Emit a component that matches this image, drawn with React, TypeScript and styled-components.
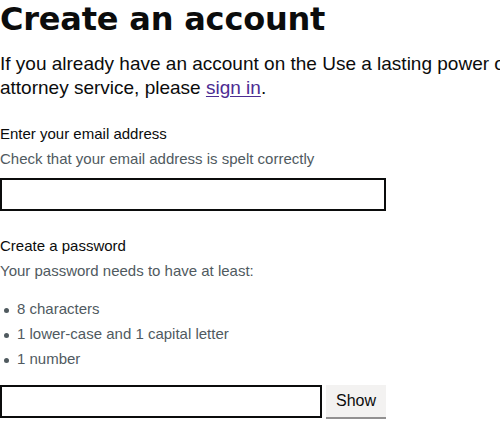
import React from 'react';
import styled, { createGlobalStyle } from 'styled-components';

const GlobalStyle = createGlobalStyle`
    html, body {
        margin: 0;
        padding: 0;
        background: #ffffff;
        overflow: hidden;
    }
    body {
        font-family: "Liberation Sans", Arial, sans-serif;
        color: #0b0c0c;
    }
`;

const Page = styled.main`
    width: 520px;
    padding: 0;
`;

const Heading = styled.h1`
    margin: 0 0 14px;
    font-family: "DejaVu Sans", "Liberation Sans", sans-serif;
    font-size: 32px;
    line-height: 38px;
    font-weight: 700;
    letter-spacing: -0.2px;
`;

const Lead = styled.p`
    margin: 0 0 24px;
    font-size: 19px;
    line-height: 24px;
    a {
        color: #4c2c92;
        text-decoration: underline;
        text-underline-offset: 2px;
    }
`;

const FormGroup = styled.div`
    margin-bottom: 25px;
`;

const Label = styled.label`
    display: block;
    margin-bottom: 5px;
    font-size: 15px;
    line-height: 20px;
`;

const Hint = styled.div<{ $gap: number }>`
    margin-bottom: ${(p) => p.$gap}px;
    font-size: 15px;
    line-height: 20px;
    color: #505a5f;
`;

const Rules = styled.ul`
    margin: 0 0 16px;
    padding: 0;
    list-style: none;
    color: #505a5f;
    li {
        display: flex;
        align-items: center;
        margin-bottom: 5px;
        font-size: 15px;
        line-height: 20px;
    }
    li::before {
        content: '';
        width: 5px;
        height: 5px;
        border-radius: 50%;
        background: #505a5f;
        margin: 2px 8px 0 4px;
    }
`;

const Input = styled.input<{ $width: number }>`
    box-sizing: border-box;
    display: block;
    width: ${(p) => p.$width}px;
    height: 33px;
    margin: 0;
    padding: 4px 6px;
    border: 2px solid #0b0c0c;
    border-radius: 0;
    font-family: inherit;
    font-size: 16px;
    background: #ffffff;
`;

const PasswordRow = styled.div`
    display: flex;
    align-items: flex-start;
    gap: 4px;
`;

const ShowButton = styled.button`
    box-sizing: border-box;
    width: 60px;
    height: 32px;
    margin: 0;
    padding: 0;
    border: 0;
    border-radius: 0;
    background: #f3f2f1;
    box-shadow: 0 2px 0 #929191;
    font-family: inherit;
    font-size: 16px;
    color: #0b0c0c;
`;

const App = () => {
    return (
        <Page>
            <GlobalStyle />
            <Heading>Create an account</Heading>
            <Lead>
                If you already have an account on the Use a lasting power of attorney service,
                please <a href="#">sign in</a>.
            </Lead>
            <FormGroup>
                <Label htmlFor="email">Enter your email address</Label>
                <Hint $gap={9}>Check that your email address is spelt correctly</Hint>
                <Input id="email" type="email" $width={386} />
            </FormGroup>
            <FormGroup>
                <Label htmlFor="password">Create a password</Label>
                <Hint $gap={18}>Your password needs to have at least:</Hint>
                <Rules>
                    <li>8 characters</li>
                    <li>1 lower-case and 1 capital letter</li>
                    <li>1 number</li>
                </Rules>
                <PasswordRow>
                    <Input id="password" type="password" $width={322} />
                    <ShowButton type="button">Show</ShowButton>
                </PasswordRow>
            </FormGroup>
        </Page>
    );
};

export default App;
